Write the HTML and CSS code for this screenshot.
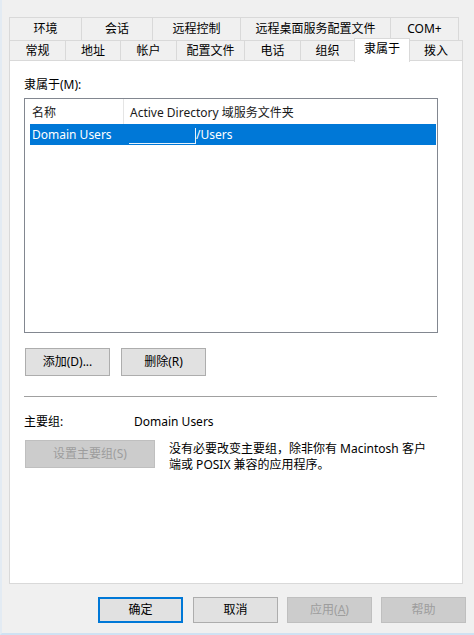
FILE: index.html
```html
<!DOCTYPE html>
<html lang="zh-CN">
<head>
<meta charset="utf-8">
<title>属性</title>
<link rel="stylesheet" href="styles.css">
</head>
<body>
<div class="dialog">
  <div class="tabs">
    <div class="tab-row row-top">
      <div class="tab t1">环境</div>
      <div class="tab t2">会话</div>
      <div class="tab t3">远程控制</div>
      <div class="tab t4">远程桌面服务配置文件</div>
      <div class="tab t5">COM+</div>
    </div>
    <div class="tab-row row-bottom">
      <div class="tab s1">常规</div>
      <div class="tab s2">地址</div>
      <div class="tab s3">帐户</div>
      <div class="tab s4">配置文件</div>
      <div class="tab s5">电话</div>
      <div class="tab s6">组织</div>
      <div class="tab s7 active">隶属于</div>
      <div class="tab s8">拨入</div>
    </div>
  </div>
  <div class="panel">
    <div class="label">隶属于(M):</div>
    <div class="listbox">
      <div class="list-header">
        <div class="col col-name">名称</div>
        <div class="col col-path">Active Directory 域服务文件夹</div>
      </div>
      <div class="list-row selected">
        <div class="cell cell-name">Domain Users</div>
        <div class="cell cell-path"><span class="redacted"></span>/Users</div>
      </div>
    </div>
    <div class="btn-row">
      <button class="btn">添加(D)...</button>
      <button class="btn">删除(R)</button>
    </div>
    <div class="separator"></div>
    <div class="primary">
      <div class="primary-label">主要组:</div>
      <div class="primary-value">Domain Users</div>
    </div>
    <div class="primary-set">
      <button class="btn btn-wide" disabled>设置主要组(S)</button>
      <p class="note">没有必要改变主要组，除非你有 Macintosh 客户端或 POSIX 兼容的应用程序。</p>
    </div>
  </div>
  <div class="footer">
    <button class="btn btn-foot default">确定</button>
    <button class="btn btn-foot">取消</button>
    <button class="btn btn-foot" disabled>应用(<span class="u">A</span>)</button>
    <button class="btn btn-foot" disabled>帮助</button>
  </div>
</div>
</body>
</html>
```

FILE: styles.css
```css
* { box-sizing: border-box; }
html, body {
  margin: 0;
  padding: 0;
  background: #f0f0f0;
}
body {
  font-family: "Noto Sans", "Noto Sans CJK SC", sans-serif;
  font-size: 12px;
  color: #000;
}
.dialog {
  width: 474px;
  height: 635px;
  padding: 17px 11px 0 9px;
  border-left: 2px solid #e3ebf3;
  border-bottom: 2px solid #cfe2f3;
  position: relative;
}
.tabs {
  display: flex;
  flex-direction: column;
}
.tab-row {
  display: flex;
}
.row-top { height: 23px; }
.row-bottom { height: 21px; position: relative; z-index: 2; }
.tab {
  border: 1px solid #d9d9d9;
  border-right: none;
  background: #f0f0f0;
  display: flex;
  align-items: center;
  justify-content: center;
  line-height: 1;
  white-space: nowrap;
}
.row-top .tab { border-bottom: none; }
.tab:last-child { border-right: 1px solid #d9d9d9; }
.t1 { width: 72px; margin-left: -2px; }
.t2 { width: 71px; }
.t3 { width: 88px; }
.t4 { width: 150px; }
.t5 { width: 69px; }
.s1 { width: 56px; margin-left: -2px; }
.s2 { width: 55px; }
.s3 { width: 56px; }
.s4 { width: 68px; }
.s5 { width: 56px; }
.s6 { width: 54px; }
.s7 { width: 56px; }
.s8 { width: 53px; }
.tab.active {
  background: #fff;
  border-right: 1px solid #d9d9d9;
  border-bottom: none;
  height: 24px;
  margin-top: -2px;
  padding-bottom: 3px;
}
.tab.active + .tab { border-left: none; }
.panel {
  width: 454px;
  height: 524px;
  margin-left: -2px;
  margin-top: -1px;
  background: #fff;
  border: 1px solid #d9d9d9;
  padding: 15px 0 0 14px;
  display: flex;
  flex-direction: column;
}
.label {
  height: 18px;
  line-height: 18px;
}
.listbox {
  margin-top: 4px;
  width: 414px;
  height: 235px;
  border: 1px solid #828790;
  background: #fff;
}
.list-header {
  display: flex;
  height: 25px;
  align-items: stretch;
}
.col {
  display: flex;
  align-items: center;
  padding-left: 7px;
  color: #1a1a1a;
}
.col-name {
  width: 99px;
  border-right: 1px solid #e5e5e5;
}
.col-path { padding-left: 6px; }
.list-row {
  display: flex;
  height: 21px;
  margin-left: 5px;
  margin-right: 1px;
  align-items: center;
}
.list-row.selected {
  background: #0078d7;
  color: #fff;
}
.cell-name {
  width: 94px;
  padding-left: 2px;
}
.cell-path {
  display: flex;
  align-items: center;
  height: 100%;
  padding-left: 5px;
}
.redacted {
  display: inline-block;
  width: 67px;
  height: 16px;
  margin-top: 2px;
  border-bottom: 1px solid #e8f2fb;
  border-right: 1px solid #e8f2fb;
}
.btn-row {
  display: flex;
  gap: 11px;
  margin-top: 15px;
  padding-left: 1px;
}
.btn {
  font: inherit;
  color: #000;
  background: #e1e1e1;
  border: 1px solid #adadad;
  width: 85px;
  height: 28px;
  padding: 0;
  line-height: 1;
}
.btn:disabled {
  background: #cccccc;
  border-color: #bfbfbf;
  color: #9d9d9d;
}
.separator {
  margin-top: 20px;
  width: 413px;
  height: 1px;
  background: #a0a0a0;
}
.primary {
  display: flex;
  margin-top: 16px;
  height: 18px;
  line-height: 18px;
}
.primary-label { width: 110px; }
.primary-set {
  display: flex;
  margin-top: 9px;
  padding-left: 1px;
  gap: 14px;
}
.btn-wide { width: 130px; flex: none; }
.note {
  margin: 1px 0 0;
  width: 264px;
  line-height: 16px;
}
.footer {
  display: flex;
  justify-content: flex-end;
  gap: 9px;
  margin-top: 13px;
  margin-right: -3px;
}
.btn-foot { height: 26px; }
.btn-foot.default {
  border: 2px solid #0078d7;
  margin-right: 1px;
}
.u { text-decoration: underline; }
```
